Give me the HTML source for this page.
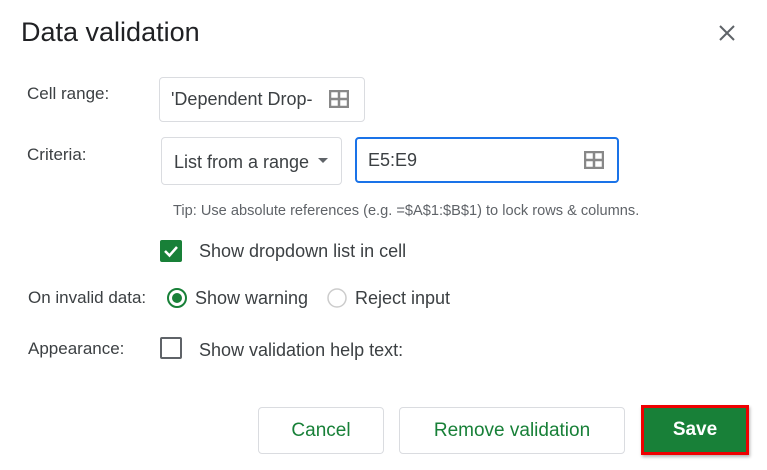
<!DOCTYPE html>
<html><head><style>
body{margin:0;width:767px;height:470px;background:#fff;position:relative;overflow:hidden;font-family:"Liberation Sans",Arial,sans-serif;color:#3c4043}
.a{position:absolute;white-space:nowrap}
.lbl{font-size:17px;color:#3c4043}
.box{position:absolute;border:1px solid #dadce0;border-radius:4px;box-sizing:border-box}
.btn{position:absolute;border:1px solid #dadce0;border-radius:4px;box-sizing:border-box;color:#188038;font-size:19px;text-align:center}
</style></head><body>
<div class="a" style="left:21px;top:17px;font-size:27px;color:#202124">Data validation</div>
<svg class="a" style="left:718px;top:24px" width="18" height="18" viewBox="0 0 18 18"><path d="M2 2L16 16M16 2L2 16" stroke="#5f6368" stroke-width="2"/></svg>

<div class="a lbl" style="left:27px;top:84px">Cell range:</div>
<div class="box" style="left:159px;top:77px;width:206px;height:45px"></div>
<div class="a" style="left:171px;top:89px;font-size:18px;color:#3c4043">'Dependent Drop-</div>
<svg class="a" style="left:329px;top:90px" width="20" height="18" viewBox="0 0 20 18"><rect x="1" y="1" width="18" height="16" fill="none" stroke="#888" stroke-width="2.5"/><path d="M10 1V17M1 9H19" stroke="#888" stroke-width="2.5"/></svg>

<div class="a lbl" style="left:27px;top:145px">Criteria:</div>
<div class="box" style="left:161px;top:137px;width:181px;height:48px"></div>
<div class="a" style="left:174px;top:152px;font-size:18px">List from a range</div>
<svg class="a" style="left:318px;top:158px" width="10" height="6"><path d="M0 0L10 0L5 5Z" fill="#5f6368"/></svg>
<div class="box" style="left:355px;top:137px;width:264px;height:46px;border:2px solid #1a73e8"></div>
<div class="a" style="left:368px;top:150px;font-size:18px">E5:E9</div>
<svg class="a" style="left:584px;top:151px" width="20" height="18" viewBox="0 0 20 18"><rect x="1" y="1" width="18" height="16" fill="none" stroke="#888" stroke-width="2.5"/><path d="M10 1V17M1 9H19" stroke="#888" stroke-width="2.5"/></svg>

<div class="a" style="left:173px;top:203px;font-size:14.6px;color:#5f6368">Tip: Use absolute references (e.g. =$A$1:$B$1) to lock rows &amp; columns.</div>

<div class="a" style="left:160px;top:240px;width:22px;height:22px;background:#188038;border-radius:2px"></div>
<svg class="a" style="left:160px;top:240px" width="22" height="22"><path d="M5 11L9.5 15.5L17 7" stroke="#fff" stroke-width="2.5" fill="none"/></svg>
<div class="a lbl" style="left:199px;top:241px;font-size:18px">Show dropdown list in cell</div>

<div class="a lbl" style="left:28px;top:288px">On invalid data:</div>
<svg class="a" style="left:166px;top:287px" width="22" height="22"><circle cx="11" cy="11" r="9" fill="none" stroke="#188038" stroke-width="2"/><circle cx="11" cy="11" r="5" fill="#188038"/></svg>
<div class="a lbl" style="left:195px;top:288px;font-size:18px">Show warning</div>
<svg class="a" style="left:326px;top:287px" width="22" height="22"><circle cx="11" cy="11" r="9" fill="none" stroke="#ccc" stroke-width="1.5"/></svg>
<div class="a lbl" style="left:355px;top:288px;font-size:18px">Reject input</div>

<div class="a lbl" style="left:28px;top:339px">Appearance:</div>
<div class="a" style="left:160px;top:337px;width:22px;height:22px;border:2px solid #5f6368;border-radius:2px;box-sizing:border-box"></div>
<div class="a lbl" style="left:199px;top:340px;font-size:18px">Show validation help text:</div>

<div class="btn" style="left:258px;top:407px;width:126px;height:47px;line-height:45px">Cancel</div>
<div class="btn" style="left:399px;top:407px;width:226px;height:47px;line-height:45px">Remove validation</div>
<div class="a" style="left:641px;top:405px;width:108px;height:50px;background:#188038;border:3px solid #e00;box-sizing:border-box;color:#fff;font-size:19px;font-weight:bold;text-align:center;line-height:44px;box-shadow:1px 2px 3px rgba(0,0,0,.3)">Save</div>
</body></html>
